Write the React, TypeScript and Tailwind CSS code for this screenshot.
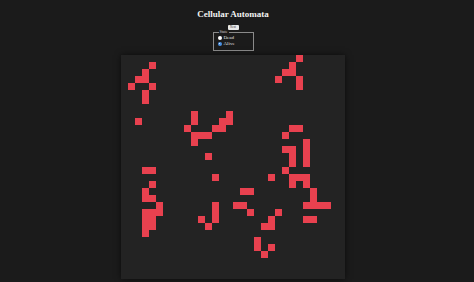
import React from "react";

const ALIVE: Record<number, number[]> = {
  0: [25],
  1: [4, 24],
  2: [3, 23, 24],
  3: [2, 3, 22, 25],
  4: [1, 4, 25],
  5: [3],
  6: [3],
  8: [10, 15],
  9: [2, 10, 14, 15],
  10: [9, 13, 14, 24, 25],
  11: [10, 11, 12, 23],
  12: [10, 26],
  13: [23, 24, 26],
  14: [12, 24, 26],
  15: [24, 26],
  16: [3, 4, 23],
  17: [13, 21, 24, 25, 26],
  18: [4, 24, 26],
  19: [3, 17, 18, 27],
  20: [3, 4, 27],
  21: [5, 13, 16, 17, 26, 27, 28, 29],
  22: [3, 4, 5, 13, 18, 22],
  23: [3, 4, 11, 13, 21, 26, 27],
  24: [3, 4, 12, 20, 21],
  25: [3],
  26: [19],
  27: [19, 21],
  28: [20],
};

const SIZE = 32;

export default function App() {
  const cells: React.ReactNode[] = [];
  for (let r = 0; r < SIZE; r++) {
    const row = ALIVE[r] || [];
    for (let c = 0; c < SIZE; c++) {
      const alive = row.includes(c);
      cells.push(
        <div
          key={`${r}-${c}`}
          className={alive ? "w-[7px] h-[7px] bg-[#e8414f]" : "w-[7px] h-[7px]"}
        />
      );
    }
  }

  return (
    <div
      className="min-h-[282px] w-full bg-[#1b1b1b] text-white"
      style={{ fontFamily: '"Liberation Serif", "Times New Roman", serif' }}
    >
      <div className="w-[466px] flex flex-col items-center">
        <h1 className="mt-[9px] text-[9px] leading-[11px] font-bold text-[#f2f2f2]">
          Cellular Automata
        </h1>
        <button className="mt-[5px] w-[11px] h-[5px] bg-[#e9e9e9] text-[#222] text-[3px] leading-[5px] flex items-center justify-center rounded-[1px]">
          Next
        </button>
        <fieldset className="mt-0 w-[41px] h-[21px] border border-[#8a8a8a] px-[4px] pt-0 pb-[1px] m-0 min-w-0">
          <legend className="text-[4px] leading-[4px] px-[1px] text-[#cfcfcf] ml-[1px]">
            State
          </legend>
          <div className="flex flex-col gap-[1px] mt-[1px]">
            <div className="flex items-center gap-[2px] text-[5px] leading-[5px] text-[#e0e0e0]">
              <span className="w-[4px] h-[4px] rounded-full bg-white" />
              <span>Dead</span>
            </div>
            <div className="flex items-center gap-[2px] text-[5px] leading-[5px] text-[#e0e0e0]">
              <span className="w-[4px] h-[4px] rounded-full bg-[#4a90e2] flex items-center justify-center">
                <span className="w-[1.5px] h-[1.5px] rounded-full bg-white" />
              </span>
              <span>Alive</span>
            </div>
          </div>
        </fieldset>
        <div className="mt-[4px] grid grid-cols-[repeat(32,7px)] bg-[#232323] shadow-[0_0_6px_rgba(0,0,0,0.6)]">
          {cells}
        </div>
      </div>
    </div>
  );
}
